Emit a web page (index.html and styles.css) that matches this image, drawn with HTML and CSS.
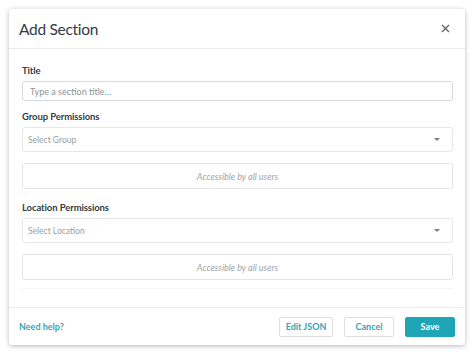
FILE: index.html
```html
<html>
<head>
<meta name="viewport" content="width=device-width, initial-scale=1.0">
<link rel="stylesheet" href="styles.css">
</head>
<body>
  <div class="modal">
    <div class="modal_head">
      <h2>Add Section</h2>
      <svg class="close" width="9" height="9" viewBox="0 0 9 9">
        <path d="M1 1L8 8M8 1L1 8" stroke="#5f656b" stroke-width="1.3" fill="none"/>
      </svg>
    </div>

    <div class="modal_body">
      <div class="fields">
        <label class="lbl">Title</label>
        <input type="text" class="txt" placeholder="Type a section title…">

        <label class="lbl">Group Permissions</label>
        <div class="select">
          <span>Select Group</span>
          <i class="caret"></i>
        </div>
        <div class="access">Accessible by all users</div>

        <label class="lbl">Location Permissions</label>
        <div class="select">
          <span>Select Location</span>
          <i class="caret"></i>
        </div>
        <div class="access">Accessible by all users</div>
      </div>
    </div>

    <div class="modal_foot">
      <a class="help" href="#">Need help?</a>
      <div class="btns">
        <button class="btn wide">Edit JSON</button>
        <button class="btn">Cancel</button>
        <button class="btn primary">Save</button>
      </div>
    </div>
  </div>
</body>
</html>
```

FILE: styles.css
```css
body {
	margin: 0;
	background: #fff;
	font-family: Lato, "Open Sans", Arial, sans-serif;
	color: #333d45;
}

.modal {
	margin: 9px;
	width: 456px;
	height: 336px;
	background: #fff;
	border-radius: 3px;
	box-shadow: 0 1px 5px rgba(0, 0, 0, 0.28);
	display: flex;
	flex-direction: column;
}

.modal_head {
	height: 39px;
	padding: 0 15px 0 10px;
	border-bottom: 1px solid #e9ebec;
	display: flex;
	align-items: center;
	justify-content: space-between;
}

.modal_head h2 {
	margin: 0;
	font-size: 15.5px;
	font-weight: normal;
	letter-spacing: -0.3px;
	color: #323c44;
}

.close {
	display: block;
}

.modal_body {
	height: 258px;
	padding: 15px 12px 0 13px;
	box-sizing: border-box;
}

.fields {
	display: flex;
	flex-direction: column;
	padding-bottom: 8px;
	border-bottom: 1px solid #f5f6f6;
}

.lbl {
	font-size: 9.5px;
	font-weight: bold;
	line-height: 14px;
	letter-spacing: -0.1px;
	color: #333d45;
	margin-bottom: 3px;
}

.txt {
	height: 20px;
	box-sizing: border-box;
	border: 1px solid #d7dadc;
	border-radius: 3px;
	padding: 0 7px;
	font-family: inherit;
	font-size: 9px;
	color: #333;
	margin-bottom: 9px;
}

.txt::placeholder {
	color: #8d9398;
}

.select {
	height: 25px;
	box-sizing: border-box;
	border: 1px solid #e6e8e9;
	border-radius: 3px;
	padding: 0 12px 0 5px;
	display: flex;
	align-items: center;
	justify-content: space-between;
	font-size: 8.5px;
	color: #9a9fa3;
}

.caret {
	width: 0;
	height: 0;
	border-left: 3px solid transparent;
	border-right: 3px solid transparent;
	border-top: 3px solid #7b8085;
}

.access {
	height: 26px;
	margin-top: 11px;
	margin-bottom: 12px;
	box-sizing: border-box;
	border: 1px solid #e2e4e5;
	border-radius: 3px;
	display: flex;
	align-items: center;
	justify-content: center;
	font-size: 9px;
	font-style: italic;
	color: #a0a4a8;
}

.fields .access:last-child {
	margin-bottom: 0;
}

.modal_foot {
	flex: 1;
	border-top: 1px solid #e9ebec;
	padding: 0 10px 0 10px;
	display: flex;
	align-items: center;
	justify-content: space-between;
}

.help {
	font-size: 9px;
	font-weight: bold;
	color: #34a5b6;
	text-decoration: none;
}

.btns {
	display: flex;
	gap: 11px;
}

.btn {
	height: 20px;
	width: 50px;
	padding: 0;
	box-sizing: border-box;
	border: 1px solid #dcdfe1;
	border-radius: 2px;
	background: #fff;
	font-family: inherit;
	font-size: 9px;
	font-weight: bold;
	color: #34a5b6;
}

.btn.wide {
	width: 54px;
}

.btn.primary {
	background: #1ea6b7;
	border-color: #1ea6b7;
	color: #fff;
}
```
